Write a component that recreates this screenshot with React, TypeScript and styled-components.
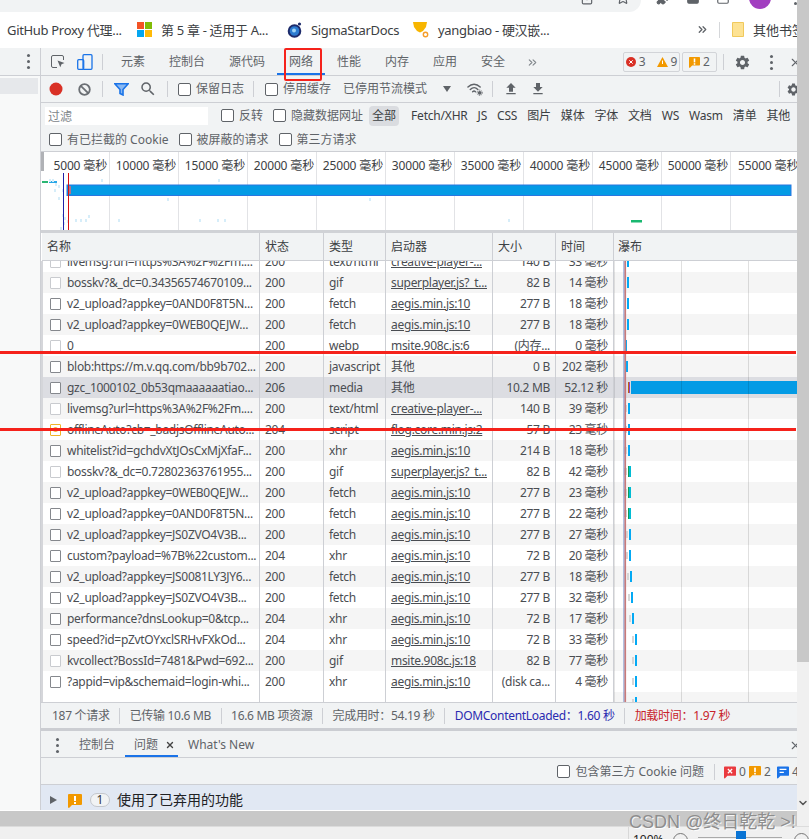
import React from "react";
import styled, { createGlobalStyle } from "styled-components";
import { ChevronsRight, ChevronDown, Star, Puzzle, Share, Square, X } from "lucide-react";
import { MdSettings, MdFileUpload, MdFileDownload, MdSearch } from "react-icons/md";

const FONT = `"Noto Sans", "Noto Sans CJK SC", sans-serif`;
const LINE = "#cdcfd4";
const COLS = "218px 64px 62px 107px 63px 58px 183px";

const Global = createGlobalStyle`
  html, body { margin: 0; padding: 0; background: #fff; }
  * { box-sizing: border-box; }
  body { font-family: ${FONT}; }
`;

const Page = styled.div`
  position: relative; width: 809px; height: 839px; overflow: hidden;
  font: 12px/16px ${FONT}; color: #4a4d52; background: #fff;
`;
const Upper = styled.div`display: flex; height: 811px;`;
const Main = styled.div`width: 797px; display: flex; flex-direction: column; overflow: hidden;`;
const VScroll = styled.div`width: 12px; display: flex; flex-direction: column; background: #f0f0f0; color: #555;`;
const VThumb = styled.div`height: 662px; background: #c8c8c8;`;
const VArrow = styled.div`margin-top: auto; height: 14px; display: flex; justify-content: center; align-items: flex-start;`;
const HScroll = styled.div`height: 15px; background: linear-gradient(90deg, #c8c8c8 797px, #f0f0f0 797px);`;
const BottomBar = styled.div`
  height: 13px; background: #f0f0f0; border-top: 1px solid #dcdcdc; display: flex; justify-content: flex-end;
  align-items: flex-start; overflow: hidden;
`;
const ZoomGroup = styled.div`
  width: 181px; height: 12px; border-left: 1px solid #d8d8d8; padding-left: 4px; display: flex; align-items: flex-start; gap: 10px; color: #222; font-size: 12px; line-height: 14px;
`;
const ZoomLabel = styled.span`margin-top: 6px; width: 30px; flex: none;`;
const ZoomRound = styled.span`width: 15px; height: 15px; border-radius: 50%; border: 1px solid #777; margin-top: 6px; flex: none;`;
const ZoomTrack = styled.span`position: relative; width: 84px; height: 1px; background: #aaa; margin: 10px 2px 0 0; flex: none;`;
const ZoomThumb = styled.span`position: absolute; left: 38px; top: -6px; width: 10px; height: 16px; background: #0a74d4;`;

const TopStrip = styled.div`height: 12px; display: flex; background: #fff;`;
const Omni = styled.div`
  width: 641px; height: 12px; background: #f1f3f4; border-bottom-right-radius: 12px;
  display: flex; justify-content: flex-end; gap: 22px; color: #5f6368; overflow: hidden; padding-right: 11px;
  svg { margin-top: -9px; flex: none; }
`;
const TopIcons = styled.div`flex: 1; display: flex; overflow: hidden; color: #5f6368; padding-left: 15px; gap: 16px; svg { margin-top: -9px; flex: none; }`;
const Avatar = styled.span`width: 22px; height: 22px; margin-top: -13px; margin-left: 3px; border-radius: 50%; background: #a23fc0; flex: none;`;
const TopDots = styled.span`width: 3px; height: 3px; border-radius: 50%; background: #5f6368; margin-top: 2px; margin-left: 7px; flex: none;`;

const Bookmarks = styled.div`height: 36px; display: flex; align-items: center; background: #fff; font-size: 13px; letter-spacing: -0.32px; color: #3c4043; white-space: nowrap; overflow: hidden; padding-bottom: 1px;`;
const Bookmark = styled.span<{ $w: number; $l?: number }>`
  width: ${p => p.$w}px; padding-left: ${p => p.$l ?? 0}px; flex: none; display: flex; align-items: center; gap: 9px;
  svg { flex: none; }
`;
const BookmarkEnd = styled.span`margin-left: auto; display: flex; align-items: center; color: #5f6368; flex: none;`;
const BookmarkSep = styled.span`width: 1px; height: 16px; background: #d5d7da; margin: 0 12px 0 10px;`;
const BookmarkFolder = styled.span`margin-left: 9px; width: 44px; overflow: hidden; color: #3c4043; letter-spacing: 0;`;

const Middle = styled.div`flex: 1; display: flex; min-height: 0; padding-bottom: 1px; background: #fff;`;
const Sidebar = styled.div`width: 41px; flex: none; background: #f8f9f9; border-right: 1px solid ${LINE};`;
const SideTop = styled.div`height: 28px; background: #f1f3f4; border-bottom: 1px solid ${LINE}; display: flex; align-items: center; justify-content: flex-end; padding-right: 10px;`;
const SideItem = styled.div`width: 38px; height: 16px; margin-top: 2px; background: #e6e8eb;`;
const DevTools = styled.div`width: 756px; flex: none; display: flex; flex-direction: column; min-height: 0;`;

const Bar = styled.div<{ $h: number; $line?: boolean; $pt?: number }>`
  height: ${p => p.$h}px; padding-top: ${p => p.$pt ?? 0}px; flex: none; display: flex; align-items: center; background: #f1f3f4; white-space: nowrap; overflow: hidden;
  ${p => (p.$line ? `border-bottom: 1px solid ${LINE};` : "")}
`;
const Slot = styled.span<{ $w: number; $mr?: number }>`
  width: ${p => p.$w}px; margin-right: ${p => p.$mr ?? 0}px; flex: none; display: flex; align-items: center; justify-content: center; color: #5f6368;
`;
const Sep = styled.span<{ $w: number }>`
  width: ${p => p.$w}px; flex: none; height: 16px; display: flex; justify-content: center;
  &::before { content: ""; width: 1px; height: 100%; background: #cdcfd4; }
`;
const Gap = styled.span<{ $w: number }>`width: ${p => p.$w}px; flex: none;`;
const Grow = styled.span`flex: 1;`;
const Tab = styled.span<{ $on?: boolean; $l?: number; $r?: number; $w?: number }>`
  height: 100%; padding: 0 ${p => p.$r ?? 12}px 0 ${p => p.$l ?? 12}px; display: flex; align-items: center; gap: 7px; flex: none; color: #5f6368;
  ${p => (p.$w ? `width: ${p.$w}px;` : "")}
  box-shadow: ${p => (p.$on ? "inset 0 -2px 0 #1a73e8" : "none")};
  svg { flex: none; }
`;
const Dots = styled.span`
  width: 3px; height: 3px; border-radius: 50%; background: #5f6368; flex: none;
  box-shadow: 0 -6px 0 #5f6368, 0 6px 0 #5f6368;
`;
const Badge = styled.span<{ $w: number; $ml: number }>`
  width: ${p => p.$w}px; margin-left: ${p => p.$ml}px; height: 20px; flex: none; border: 1px solid #d2d4d8; border-radius: 2px;
  display: flex; align-items: center; justify-content: center; gap: 3px; color: #5f6368; font-size: 12px;
`;
const BadgeGap = styled.span`width: 5px;`;
const Box = styled.span`
  width: 13px; height: 13px; flex: none; border: 1px solid #5f6368; border-radius: 2px; background: #fff;
`;
const Check = styled.span<{ $ml?: number }>`
  display: flex; align-items: center; gap: 5px; margin-left: ${p => p.$ml ?? 0}px; flex: none; color: #5f6368;
`;
const Count = styled.span<{ $mr?: number }>`
  display: flex; align-items: center; gap: 3px; width: 22px; margin-right: ${p => p.$mr ?? 0}px; flex: none; color: #5f6368; overflow: hidden;
  svg { flex: none; }
`;
const PlainText = styled.span<{ $ml?: number }>`margin-left: ${p => p.$ml ?? 0}px; color: #5f6368; flex: none;`;
const FilterInput = styled.span`
  width: 163px; height: 18px; margin-left: 4px; padding-left: 3px; background: #fff; color: #80868b; flex: none; line-height: 19px;
`;
const Chips = styled.span`display: flex; gap: 10px; align-items: center; color: #3c4043; flex: none; letter-spacing: -0.2px;`;
const ChipOn = styled.span`width: 30px; height: 20px; margin-left: 6px; background: #dadce0; border-radius: 4px; display: flex; align-items: center; justify-content: center; color: #3c4043; flex: none;`;

const Timeline = styled.div`
  position: relative; height: 82px; flex: none; background: #fff; display: grid;
  grid-template-columns: 69px repeat(10, 69px); overflow: hidden; border-top: 1px solid ${LINE}; border-bottom: 3px solid #d0d2d6;
`;
const TimeCol = styled.div`border-right: 1px solid #e2e3e6; text-align: right; padding: 6px 2px 0 0; color: #3c4043; white-space: nowrap; font-size: 12px; letter-spacing: -0.15px;`;
const TimeLast = styled(TimeCol)`border-right: 0; text-align: left; padding-left: 7px;`;
const TimeChart = styled.svg`position: absolute; left: 0; top: 0; pointer-events: none;`;

const Grid = styled.div`display: grid; grid-template-columns: ${COLS};`;
const Head = styled(Grid)`height: 28px; flex: none; background: #f1f3f4; border-bottom: 1px solid ${LINE}; margin-left: 1px;`;
const HeadCell = styled.div`padding-left: 5px; border-right: 1px solid ${LINE}; line-height: 27px; height: 27px; overflow: hidden; color: #3c4043; &:last-child { border-right: 0; padding-left: 4px; }`;
const Viewport = styled.div`
  position: relative; height: 441px; flex: none; overflow: hidden; background: #fff; border-left: 2px solid #d5d6da;
`;
const RowsInner = styled.div`margin-top: -10px; margin-left: -1px;`;
const Row = styled(Grid)<{ $bg: string }>`height: 21px; background: ${p => p.$bg};`;
const Cell = styled.div<{ $right?: boolean; $link?: boolean }>`
  height: 21px; line-height: 21px; padding: 0 ${p => (p.$right ? 5 : 0)}px 0 ${p => (p.$right ? 0 : 5)}px;
  text-align: ${p => (p.$right ? "right" : "left")}; border-right: 1px solid ${LINE}; white-space: nowrap; overflow: hidden;
  text-decoration: ${p => (p.$link ? "underline" : "none")}; color: #4a4d52; font-size: 12px; letter-spacing: -0.3px;
`;
const NameCell = styled(Cell)`display: flex; align-items: center; gap: 6px; padding-left: 8px; text-decoration: none; letter-spacing: -0.3px;`;
const FileBox = styled.span<{ $tone: string }>`
  width: 11px; height: 12px; flex: none; border: 1px solid ${p => p.$tone}; background: #fff; border-radius: 1px; display: flex; align-items: center; justify-content: center;
`;
const FileDot = styled.span`width: 5px; height: 5px; background: #f6b93b; border-radius: 50%;`;
const WaterCell = styled.svg<{ $bg?: string }>`display: block; background: ${p => p.$bg || "transparent"};`;
const WaterLines = styled.svg`position: absolute; right: 0; top: 0; pointer-events: none;`;

const StatusBar = styled.div`
  height: 29px; flex: none; display: flex; align-items: center; background: #f1f3f4; padding: 0 0 0 11px; color: #5f6368;
  border-top: 1px solid ${LINE}; border-bottom: 3px solid #cbcdd2; white-space: nowrap; overflow: hidden; letter-spacing: -0.3px;
`;
const StatusItem = styled.span<{ $c?: string; $last?: boolean }>`
  color: ${p => p.$c || "#5f6368"}; padding-right: 9.5px; margin-right: 9.5px; flex: none; height: 16px;
  border-right: ${p => (p.$last ? "0" : "1px solid #cdcfd4")};
`;
const IssueRow = styled.div`
  height: 25px; flex: none; background: #e1e8f3; display: flex; align-items: center; padding: 5px 0 0 9px; font-size: 14px; color: #202124; overflow: hidden;
`;
const Tri = styled.span`width: 0; height: 0; border-left: 7px solid #5f6368; border-top: 4.5px solid transparent; border-bottom: 4.5px solid transparent; margin-right: 11px; flex: none;`;
const Pill = styled.span`
  width: 20px; height: 14px; border-radius: 7px; border: 1px solid #c4c7cc; background: #f1f3f4; display: flex; align-items: center; justify-content: center;
  font-size: 12px; margin: 0 7px 0 8px; flex: none; color: #333;
`;
const RedLine = styled.div<{ $t: number }>`position: absolute; left: 0; top: ${p => p.$t}px; width: 796px; height: 3px; background: #f5221b;`;
const RedBox = styled.div`position: absolute; left: 284px; top: 48px; width: 38px; height: 33px; border: 2.5px solid #f5221b; border-radius: 2px;`;
const Watermark = styled.div`
  position: absolute; left: 629px; top: 809px; font: 18px/26px "Liberation Sans", "Noto Sans CJK SC", sans-serif; color: #8e8e8e; white-space: nowrap;
  text-shadow: 1px 1px 0 rgba(255,255,255,.85);
`;

type R = [string, string, string, string, string, string];
const rows: { d: R; link?: boolean; tone?: string; bars: number[][]; orange?: boolean; sel?: boolean }[] = [
  { d: ["livemsg?url=https%3A%2F%2Fm....", "200", "text/html", "creative-player-...", "140 B", "33 毫秒"], link: true, tone: "#c9cbcf", bars: [[627, 629, 0]] },
  { d: ["bosskv?&_dc=0.34356574670109...", "200", "gif", "superplayer.js?_t...", "82 B", "14 毫秒"], link: true, tone: "#c9cbcf", bars: [[627, 629, 0]] },
  { d: ["v2_upload?appkey=0AND0F8T5N...", "200", "fetch", "aegis.min.js:10", "277 B", "18 毫秒"], link: true, bars: [[627, 629, 0]] },
  { d: ["v2_upload?appkey=0WEB0QEJW...", "200", "fetch", "aegis.min.js:10", "277 B", "18 毫秒"], link: true, bars: [[627, 629, 0]] },
  { d: ["0", "200", "webp", "msite.908c.js:6", "(内存...", "0 毫秒"], link: true, tone: "#c9cbcf", bars: [[626, 627, 0]] },
  { d: ["blob:https://m.v.qq.com/bb9b702...", "200", "javascript", "其他", "0 B", "202 毫秒"], bars: [[626, 628, 0]] },
  { d: ["gzc_1000102_0b53qmaaaaaatiao...", "206", "media", "其他", "10.2 MB", "52.12 秒"], sel: true, bars: [[628, 629, 2], [629, 630, 3], [631, 797, 4]] },
  { d: ["livemsg?url=https%3A%2F%2Fm....", "200", "text/html", "creative-player-...", "140 B", "39 毫秒"], link: true, tone: "#c9cbcf", bars: [[625, 627, 1], [628, 630, 0]] },
  { d: ["offlineAuto?cb=_badjsOfflineAuto...", "204", "script", "flog.core.min.js:2", "57 B", "23 毫秒"], link: true, orange: true, tone: "#f0b429", bars: [[625, 627, 1], [628, 630, 0]] },
  { d: ["whitelist?id=gchdvXtJOsCxMjXfaF...", "200", "xhr", "aegis.min.js:10", "214 B", "18 毫秒"], link: true, bars: [[624, 627, 1], [628, 630, 0]] },
  { d: ["bosskv?&_dc=0.72802363761955...", "200", "gif", "superplayer.js?_t...", "82 B", "42 毫秒"], link: true, tone: "#c9cbcf", bars: [[624, 627, 1], [628, 629, 5], [629, 631, 6]] },
  { d: ["v2_upload?appkey=0WEB0QEJW...", "200", "fetch", "aegis.min.js:10", "277 B", "23 毫秒"], link: true, bars: [[624, 627, 1], [628, 629, 5], [629, 631, 6]] },
  { d: ["v2_upload?appkey=0AND0F8T5N...", "200", "fetch", "aegis.min.js:10", "277 B", "22 毫秒"], link: true, bars: [[624, 627, 1], [628, 629, 5], [629, 631, 6]] },
  { d: ["v2_upload?appkey=JS0ZVO4V3B...", "200", "fetch", "aegis.min.js:10", "277 B", "27 毫秒"], link: true, bars: [[625, 628, 1], [629, 631, 0]] },
  { d: ["custom?payload=%7B%22custom...", "204", "xhr", "aegis.min.js:10", "72 B", "20 毫秒"], link: true, bars: [[625, 628, 1], [629, 631, 0]] },
  { d: ["v2_upload?appkey=JS0081LY3JY6...", "200", "fetch", "aegis.min.js:10", "277 B", "18 毫秒"], link: true, bars: [[627, 629, 1], [630, 632, 0]] },
  { d: ["v2_upload?appkey=JS0ZVO4V3B...", "200", "fetch", "aegis.min.js:10", "277 B", "32 毫秒"], link: true, bars: [[628, 630, 1], [631, 633, 0]] },
  { d: ["performance?dnsLookup=0&tcp...", "204", "xhr", "aegis.min.js:10", "72 B", "17 毫秒"], link: true, bars: [[629, 631, 1], [632, 634, 0]] },
  { d: ["speed?id=pZvtOYxclSRHvFXkOd...", "204", "xhr", "aegis.min.js:10", "72 B", "33 毫秒"], link: true, bars: [[632, 634, 1], [635, 637, 0]] },
  { d: ["kvcollect?BossId=7481&Pwd=692...", "200", "gif", "msite.908c.js:18", "82 B", "77 毫秒"], link: true, tone: "#c9cbcf", bars: [[632, 634, 1], [635, 637, 0]] },
  { d: ["?appid=vip&schemaid=login-whi...", "200", "xhr", "aegis.min.js:10", "(disk ca...", "4 毫秒"], link: true, bars: [[632, 634, 1], [635, 637, 0]] },
];
const barColor = ["#03a9f4", "#d6d6d6", "#c2620e", "#8e44c9", "#039be5", "#0f9d58", "#00bcd4"];

const Water = ({ bars, bg }: { bars: number[][]; bg?: string }) => (
  <WaterCell $bg={bg} width={183} height={21} viewBox="614 0 183 21">
    {bars.map(([a, b, c], i) => (
      <rect key={i} x={a} width={b - a} y={c === 4 ? 4 : c === 1 ? 7 : 5} height={c === 4 ? 13 : c === 1 ? 7 : 11} fill={barColor[c]} />
    ))}
  </WaterCell>
);

const times = ["5000", "10000", "15000", "20000", "25000", "30000", "35000", "40000", "45000", "50000"];
const sparks = [
  [49, 27], [52, 27], [55, 31], [58, 33], [62, 37], [58, 45], [54, 37], [62, 62], [64, 65], [67, 68], [75, 67], [80, 67], [85, 67], [88, 63],
  [101, 27], [118, 67], [199, 67], [217, 67], [224, 67], [167, 46], [218, 27], [369, 46], [508, 67], [60, 75], [63, 70],
];

const Wifi = () => (
  <svg width="17" height="14" viewBox="0 0 17 14" fill="none" stroke="#5f6368" strokeWidth="1.5">
    <path d="M1 5c4-4 9-4 13 0M3.5 7.5c2.6-2.6 5.6-2.6 8 0M6 10c1-1 2-1 3 0" strokeLinecap="round" />
    <circle cx="13.5" cy="11" r="2" fill="#5f6368" stroke="none" />
    <circle cx="13.5" cy="11" r="2.8" stroke="#5f6368" strokeWidth="1" strokeDasharray="1 1" />
  </svg>
);
const OrangeFlag = ({ s = 14 }: { s?: number }) => (
  <svg width={s} height={s + 1} viewBox="0 0 14 15">
    <path d="M1 1h12a1 1 0 0 1 1 1v9a1 1 0 0 1-1 1H4l-3 3a1 1 0 0 1-1-1V2a1 1 0 0 1 1-1z" fill="#f29900" />
    <rect x="6" y="3" width="2" height="5" fill="#fff" /><rect x="6" y="9" width="2" height="2" fill="#fff" />
  </svg>
);

export default function App() {
  return (
    <Page>
      <Global />
      <Upper>
        <Main>
          <TopStrip>
            <Omni><Share size={14} /><Star size={14} /></Omni>
            <TopIcons>
              <Puzzle size={14} fill="#5f6368" />
              <Square size={14} fill="#5f6368" />
              <Square size={14} />
              <Avatar />
              <TopDots />
            </TopIcons>
          </TopStrip>
          <Bookmarks>
            <Bookmark $w={137} $l={7}>GitHub Proxy 代理...</Bookmark>
            <Bookmark $w={150}>
              <svg width="15" height="15" viewBox="0 0 15 15"><rect width="7" height="7" fill="#f35325" /><rect x="8" width="7" height="7" fill="#81bc06" /><rect y="8" width="7" height="7" fill="#05a6f0" /><rect x="8" y="8" width="7" height="7" fill="#ffba08" /></svg>
              第 5 章 - 适用于 A...
            </Bookmark>
            <Bookmark $w={126}>
              <svg width="15" height="16" viewBox="0 0 15 16"><circle cx="7.5" cy="9" r="5.8" fill="#2b7bd0" stroke="#1d2b6b" strokeWidth="2" /><circle cx="7" cy="8.5" r="2" fill="#9fd4f5" /><circle cx="12.5" cy="2" r="1.6" fill="#1d2b6b" /></svg>
              SigmaStarDocs
            </Bookmark>
            <Bookmark $w={140}>
              <svg width="16" height="16" viewBox="0 0 16 16"><path d="M0 0h14l-1 5-3 4-3 1.5L4 9 1 5z" fill="#f7b500" /><circle cx="12.5" cy="12.5" r="2.2" fill="none" stroke="#f59d2a" strokeWidth="1.4" /></svg>
              yangbiao - 硬汉嵌...
            </Bookmark>
            <BookmarkEnd>
              <ChevronsRight size={13} strokeWidth={2.4} />
              <BookmarkSep />
              <svg width="12" height="15" viewBox="0 0 12 15"><path d="M.5.5h11v14H.5z" fill="#fde293" stroke="#f0c95c" /></svg>
              <BookmarkFolder>其他书签</BookmarkFolder>
            </BookmarkEnd>
          </Bookmarks>
          <Middle>
            <Sidebar>
              <SideTop><Dots /></SideTop>
              <SideItem />
            </Sidebar>
            <DevTools>
              <Bar $h={28} $line $pt={1}>
                <Slot $w={33}>
                  <svg width="14" height="14" viewBox="0 0 14 14" fill="none"><path d="M6 12.5H2A1.5 1.5 0 0 1 .5 11V2A1.5 1.5 0 0 1 2 .5h9A1.5 1.5 0 0 1 12.5 2v3" stroke="#5f6368" /><path d="M6.5 5.5l7 2.6-3 1.2-1.2 3z" fill="#5f6368" /></svg>
                </Slot>
                <Slot $w={22}>
                  <svg width="16" height="16" viewBox="0 0 16 16" fill="none" stroke="#1a73e8" strokeWidth="1.3"><rect x="6" y=".7" width="9" height="14.6" rx="1" /><rect x=".7" y="5.7" width="6" height="9.6" rx="1" /></svg>
                </Slot>
                <Sep $w={13} />
                <Tab>元素</Tab><Tab>控制台</Tab><Tab>源代码</Tab><Tab $on>网络</Tab><Tab>性能</Tab><Tab>内存</Tab><Tab>应用</Tab><Tab>安全</Tab>
                <Slot $w={30}><ChevronsRight size={13} color="#80868b" /></Slot>
                <Grow />
                <Badge $w={57} $ml={0}>
                  <svg width="10" height="10" viewBox="0 0 10 10"><circle cx="5" cy="5" r="5" fill="#d93025" /><path d="M3.3 3.3l3.4 3.4M6.7 3.3L3.3 6.7" stroke="#fff" /></svg>3
                  <BadgeGap />
                  <svg width="11" height="10" viewBox="0 0 11 10"><path d="M5.5 0L11 10H0z" fill="#f29900" /><rect x="5" y="3.5" width="1" height="3.5" fill="#fff" /></svg>9
                </Badge>
                <Badge $w={35} $ml={2}><OrangeFlag s={11} />2</Badge>
                <Sep $w={12} />
                <Slot $w={26}><MdSettings size={17} /></Slot>
                <Slot $w={32}><Dots /></Slot>
                <Slot $w={16} $mr={-6}><X size={13} /></Slot>
              </Bar>
              <Bar $h={27} $line>
                <Slot $w={29}><svg width="14" height="14" viewBox="0 0 14 14"><circle cx="7" cy="7" r="6.5" fill="#d93025" /></svg></Slot>
                <Slot $w={28}><svg width="13" height="13" viewBox="0 0 13 13" fill="none" stroke="#6b6f74" strokeWidth="1.8"><circle cx="6.5" cy="6.5" r="5.3" /><path d="M2.8 2.8l7.4 7.4" /></svg></Slot>
                <Sep $w={8} />
                <Slot $w={30}><svg width="15" height="13" viewBox="0 0 15 13" fill="none" stroke="#1a73e8" strokeWidth="1.6"><path d="M.8.8h13.4L9 6.5V12L6 10.5v-4z" fill="#8ab9f3" /></svg></Slot>
                <Slot $w={24}><MdSearch size={18} /></Slot>
                <Sep $w={14} />
                <Check $ml={4}><Box />保留日志</Check>
                <Sep $w={19} />
                <Check $ml={2}><Box />停用缓存</Check>
                <PlainText $ml={12}>已停用节流模式</PlainText>
                <Slot $w={40}><svg width="8" height="6" viewBox="0 0 8 6"><path d="M0 0h8L4 6z" fill="#5f6368" /></svg></Slot>
                <Slot $w={16}><Wifi /></Slot>
                <Sep $w={18} />
                <Slot $w={20}><MdFileUpload size={16} /></Slot>
                <Slot $w={34}><MdFileDownload size={16} /></Slot>
                <Grow />
                <Sep $w={8} />
                <Slot $w={20} $mr={-6}><MdSettings size={15} /></Slot>
              </Bar>
              <Bar $h={25}>
                <FilterInput>过滤</FilterInput>
                <Check $ml={13}><Box />反转</Check>
                <Check $ml={10}><Box />隐藏数据网址</Check>
                <ChipOn>全部</ChipOn>
                <Gap $w={12} />
                <Chips>
                  <span>Fetch/XHR</span><span>JS</span><span>CSS</span><span>图片</span><span>媒体</span><span>字体</span><span>文档</span><span>WS</span><span>Wasm</span><span>清单</span><span>其他</span>
                </Chips>
              </Bar>
              <Bar $h={23}>
                <Check $ml={8}><Box />有已拦截的 Cookie</Check>
                <Check $ml={10}><Box />被屏蔽的请求</Check>
                <Check $ml={10}><Box />第三方请求</Check>
              </Bar>
              <Timeline>
                {times.map(t => <TimeCol key={t}>{t} 毫秒</TimeCol>)}
                <TimeLast>55000 毫秒</TimeLast>
                <TimeChart width={756} height={81} viewBox="41 151 756 81">
                  <rect x={41} y={151} width={3} height={19} fill="#b0b2b6" />
                  <rect x={42} y={180} width={6} height={2} fill="#2bb673" />
                  <rect x={49} y={180} width={8} height={2} fill="#29a8e8" />
                  <rect x={631} y={219} width={11} height={2.5} fill="#19b870" />
                  {sparks.map(([x, y], i) => <rect key={i} x={x} y={y + 151} width={2} height={3} fill="#d6edf9" />)}
                  <rect x={67} y={184} width={724} height={10.5} fill="#039be5" stroke="#2a76e0" />
                  <rect x={68} y={185} width={3} height={8} fill="#b4708c" />
                  <rect x={63} y={172} width={1} height={60} fill="#2020a8" />
                  <rect x={68} y={172} width={1} height={60} fill="#d81010" />
                </TimeChart>
              </Timeline>
              <Head>
                <HeadCell>名称</HeadCell><HeadCell>状态</HeadCell><HeadCell>类型</HeadCell><HeadCell>启动器</HeadCell><HeadCell>大小</HeadCell><HeadCell>时间</HeadCell><HeadCell>瀑布</HeadCell>
              </Head>
              <Viewport>
                <RowsInner>
                  {rows.map((r, i) => (
                    <Row key={i} $bg={r.sel ? "#dcdde2" : i % 2 ? "#f5f5f5" : "#fff"}>
                      <NameCell><FileBox $tone={r.tone || "#85888d"}>{r.orange && <FileDot />}</FileBox>{r.d[0]}</NameCell>
                      <Cell>{r.d[1]}</Cell>
                      <Cell>{r.d[2]}</Cell>
                      <Cell $link={r.link}>{r.d[3]}</Cell>
                      <Cell $right>{r.d[4]}</Cell>
                      <Cell $right>{r.d[5]}</Cell>
                      <Water bars={r.bars} />
                    </Row>
                  ))}
                  <Row $bg="#fff">
                    <Cell /><Cell /><Cell /><Cell /><Cell /><Cell />
                    <Water bg="#f5f5f5" bars={[[632, 634, 1], [635, 637, 0]]} />
                  </Row>
                </RowsInner>
                <WaterLines width={183} height={441} viewBox="614 0 183 441">
                  <rect x={614} width={1} height={441} fill="rgba(0,0,0,.1)" />
                  <rect x={681} width={1} height={441} fill="rgba(0,0,0,.12)" />
                  <rect x={748} width={1} height={441} fill="rgba(0,0,0,.12)" />
                  <rect x={623.5} width={1} height={441} fill="#6f86c4" />
                  <rect x={624.5} width={1.6} height={441} fill="#c97a7a" />
                </WaterLines>
              </Viewport>
              <StatusBar>
                <StatusItem>187 个请求</StatusItem>
                <StatusItem>已传输 10.6 MB</StatusItem>
                <StatusItem>16.6 MB 项资源</StatusItem>
                <StatusItem>完成用时：54.19 秒</StatusItem>
                <StatusItem $c="#2a2ab0">DOMContentLoaded：1.60 秒</StatusItem>
                <StatusItem $c="#c8232a" $last>加载时间：1.97 秒</StatusItem>
              </StatusBar>
              <Bar $h={27} $line $pt={2}>
                <Slot $w={32}><Dots /></Slot>
                <Gap $w={6} />
                <Tab $l={0} $r={10}>控制台</Tab>
                <Tab $on $l={9} $r={0} $w={53}>问题<X size={10} strokeWidth={3.2} color="#444" /></Tab>
                <Tab $l={10} $r={0}>What's New</Tab>
                <Grow />
                <Slot $w={16} $mr={-6}><X size={13} /></Slot>
              </Bar>
              <Bar $h={27} $line $pt={1}>
                <Grow />
                <Check><Box />包含第三方 Cookie 问题</Check>
                <Sep $w={20} />
                <Count $mr={3}>
                  <svg width="12" height="14" viewBox="0 0 14 15"><path d="M1 1h12a1 1 0 0 1 1 1v9a1 1 0 0 1-1 1H4l-3 3a1 1 0 0 1-1-1V2a1 1 0 0 1 1-1z" fill="#ea3a3f" /><path d="M4.5 4l5 5M9.5 4l-5 5" stroke="#fff" strokeWidth="1.4" /></svg>0
                </Count>
                <Count $mr={6}><OrangeFlag s={12} />2</Count>
                <Count $mr={-2}>
                  <svg width="12" height="14" viewBox="0 0 14 15"><path d="M1 1h12a1 1 0 0 1 1 1v9a1 1 0 0 1-1 1H4l-3 3a1 1 0 0 1-1-1V2a1 1 0 0 1 1-1z" fill="#1a73e8" /><path d="M3 4.5h8M3 8h5" stroke="#fff" strokeWidth="1.4" /></svg>4
                </Count>
              </Bar>
              <IssueRow>
                <Tri />
                <OrangeFlag s={14} />
                <Pill>1</Pill>
                使用了已弃用的功能
              </IssueRow>
            </DevTools>
          </Middle>
        </Main>
        <VScroll>
          <VThumb />
          <VArrow><ChevronDown size={12} strokeWidth={3} /></VArrow>
        </VScroll>
      </Upper>
      <HScroll />
      <BottomBar>
        <ZoomGroup>
          <ZoomLabel>100%</ZoomLabel>
          <ZoomRound />
          <ZoomTrack><ZoomThumb /></ZoomTrack>
          <ZoomRound />
        </ZoomGroup>
      </BottomBar>
      <RedLine $t={351} />
      <RedLine $t={428} />
      <RedBox />
      <Watermark>CSDN @终日乾乾 &gt;!</Watermark>
    </Page>
  );
}
